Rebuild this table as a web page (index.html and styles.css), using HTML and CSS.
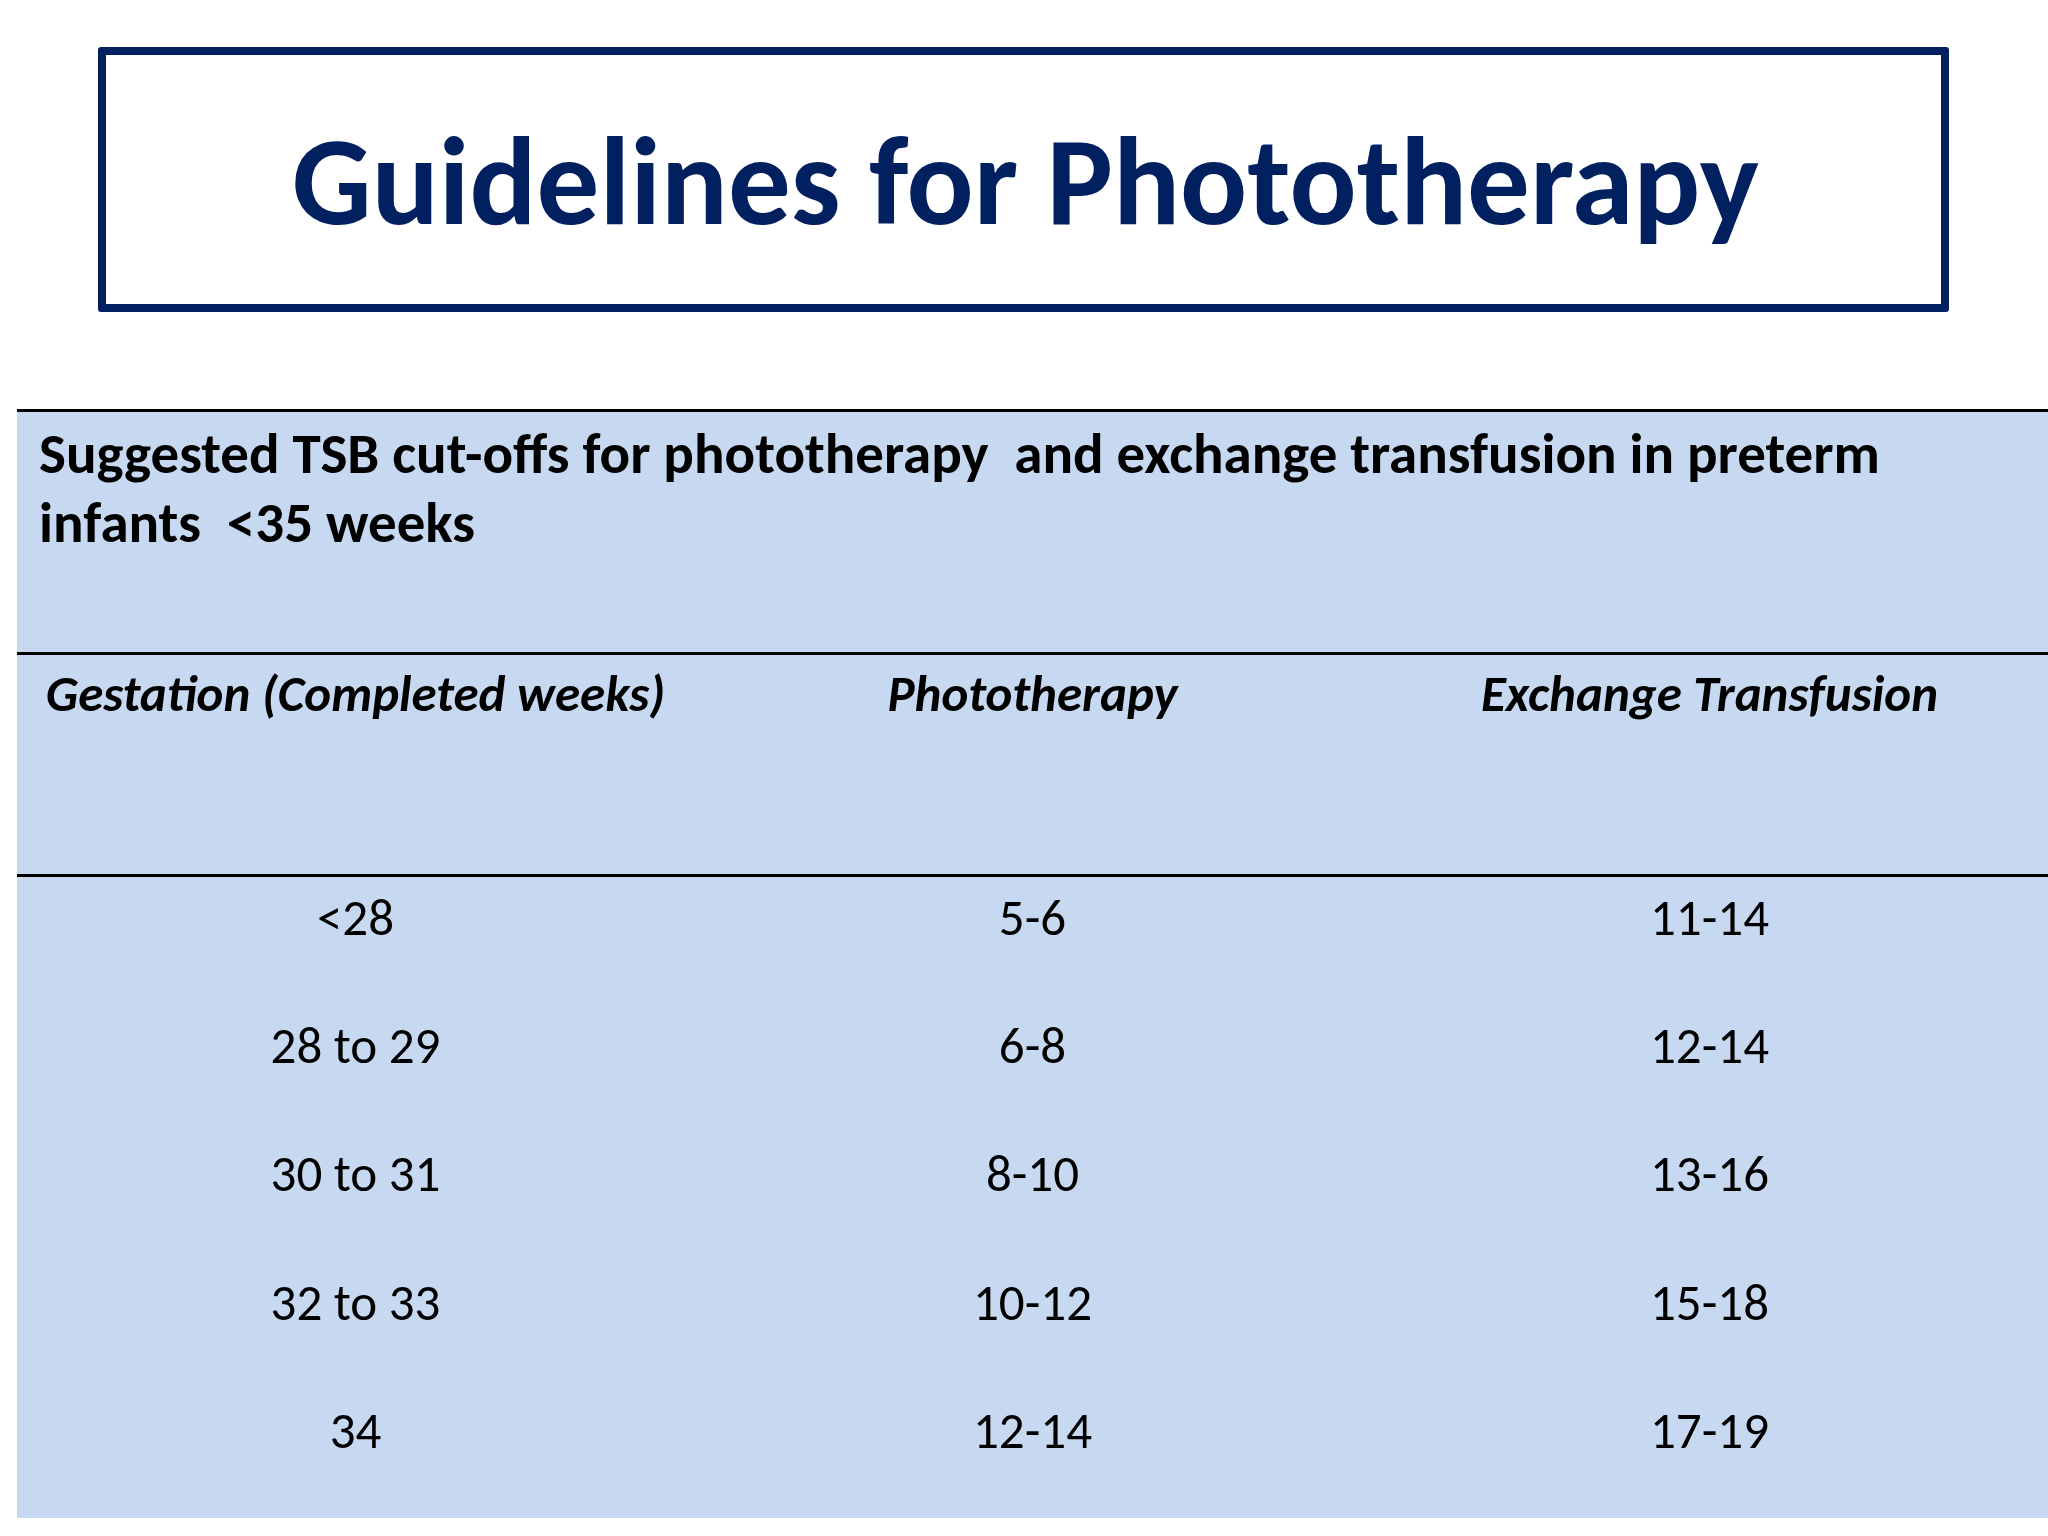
FILE: index.html
```html
<!DOCTYPE html>
<html lang="en">
<head>
<meta charset="utf-8">
<title>Guidelines for Phototherapy</title>
<link rel="stylesheet" href="styles.css">
</head>
<body>
<div class="slide">
  <div class="title-box">
    <h1 class="title">Guidelines for Phototherapy</h1>
  </div>
  <div class="table">
    <div class="caption">Suggested TSB cut-offs for phototherapy&nbsp; and exchange transfusion in preterm infants&nbsp; &lt;35 weeks</div>
    <div class="head-row">
      <div class="head-cell">Gestation (Completed weeks)</div>
      <div class="head-cell">Phototherapy</div>
      <div class="head-cell">Exchange Transfusion</div>
    </div>
    <div class="body-rows">
      <div class="cell">&lt;28</div><div class="cell">5-6</div><div class="cell">11-14</div>
      <div class="cell">28 to 29</div><div class="cell">6-8</div><div class="cell">12-14</div>
      <div class="cell">30 to 31</div><div class="cell">8-10</div><div class="cell">13-16</div>
      <div class="cell">32 to 33</div><div class="cell">10-12</div><div class="cell">15-18</div>
      <div class="cell">34</div><div class="cell">12-14</div><div class="cell">17-19</div>
    </div>
  </div>
</div>
</body>
</html>
```

FILE: styles.css
```css
html, body {
  margin: 0;
  padding: 0;
  background: #ffffff;
  overflow: hidden;
}

.slide {
  width: 2048px;
  height: 1536px;
  padding-top: 47px;
  box-sizing: border-box;
  font-family: Carlito, Calibri, Lato, "Liberation Sans", sans-serif;
  color: #000000;
}

.title-box {
  margin-left: 98px;
  width: 1851px;
  height: 265px;
  box-sizing: border-box;
  border: 8px solid #002060;
  border-radius: 3px;
  display: flex;
  align-items: center;
  justify-content: center;
}

.title {
  margin: 0;
  font-size: 125px;
  line-height: 125px;
  font-weight: 700;
  color: #002060;
  transform: translate(2px, 2px);
}

.table {
  margin-top: 97px;
  margin-left: 17px;
  width: 2031px;
  background: #c6d9f1;
  border-top: 3px solid #000000;
}

.caption {
  height: 243px;
  box-sizing: border-box;
  padding: 7px 140px 0 22px;
  font-size: 57px;
  line-height: 69px;
  font-weight: 700;
  border-bottom: 3px solid #000000;
}

.head-row {
  height: 222px;
  box-sizing: border-box;
  display: grid;
  grid-template-columns: repeat(3, 1fr);
  border-bottom: 3px solid #000000;
}

.head-cell {
  padding-top: 7px;
  text-align: center;
  font-size: 51px;
  line-height: 64px;
  font-weight: 700;
  font-style: italic;
}

.body-rows {
  display: grid;
  grid-template-columns: repeat(3, 1fr);
  grid-auto-rows: 128.2px;
}

.cell {
  padding-top: 9px;
  text-align: center;
  font-size: 51px;
  line-height: 64px;
  font-weight: 400;
}
```
